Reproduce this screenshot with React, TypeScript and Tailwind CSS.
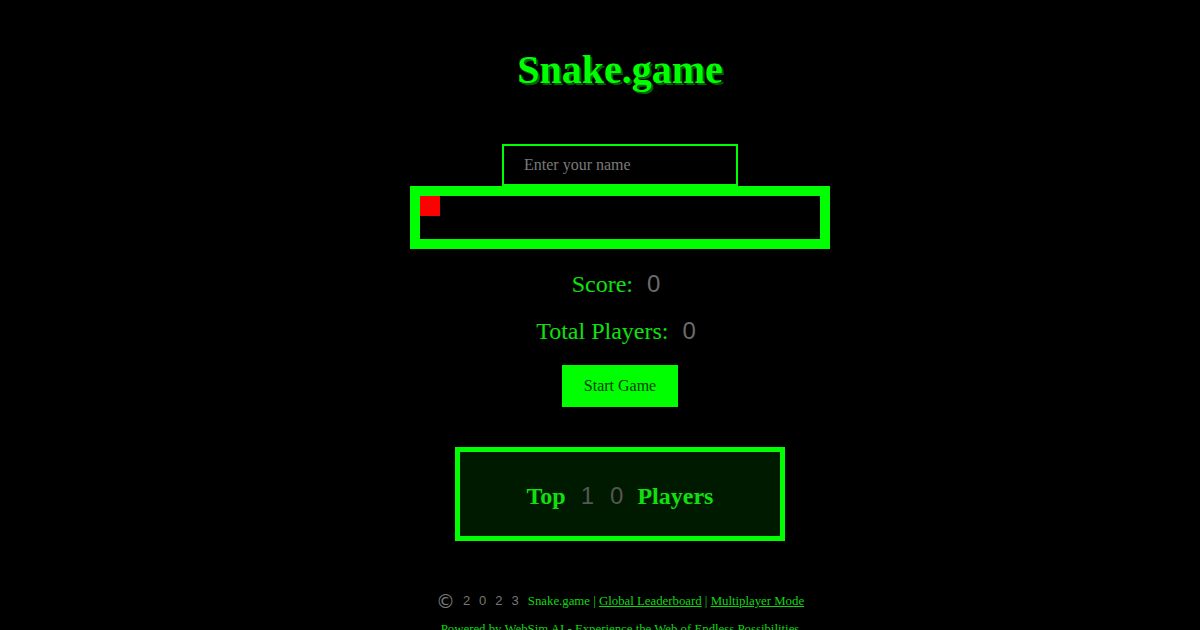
import React from 'react';

const serif = "font-['Liberation_Serif','Times_New_Roman',serif]";
const sans = "font-['Liberation_Sans',Arial,sans-serif]";

function Digits({ value, className }: { value: string; className: string }) {
  return (
    <span className={`${sans} text-[#6b6b6b] ${className}`}>
      {value.split('').map((d, i) => (
        <span key={i}>{d}</span>
      ))}
    </span>
  );
}

export default function App() {
  return (
    <div className={`min-h-[630px] h-[630px] w-full overflow-hidden bg-black pl-[40px] ${serif}`}>
      <div className="flex flex-col items-center">
        <h1 className="mt-[47px] text-[40px] font-bold leading-[46px] text-[#00ff00] [text-shadow:2px_2px_#006400]">
          Snake.game
        </h1>

        <input
          type="text"
          placeholder="Enter your name"
          className="mt-[51px] h-[42px] w-[236px] border-2 border-[#00ff00] bg-black pl-5 text-base text-[#00ff00] outline-none placeholder:text-[#7a7a7a]"
        />

        {/* board */}
        <div className="h-[63px] w-[420px] border-[10px] border-[#00ff00] bg-black">
          <div className="h-5 w-5 bg-[#ff0000]" />
        </div>

        <div className="mt-[20px] flex items-center text-2xl leading-[30px] text-[#10e010]">
          <span>Score:</span>
          <Digits value="0" className="ml-[14px] mr-[8px] text-[24px]" />
        </div>

        <div className="mt-[17px] flex items-center text-2xl leading-[30px] text-[#10e010]">
          <span>Total Players:</span>
          <Digits value="0" className="ml-[14px] mr-[8px] text-[24px]" />
        </div>

        <button className="mt-[19px] h-[42px] w-[116px] bg-[#00ff00] text-base text-[#0a3a0a]">
          Start Game
        </button>

        <div className="mt-[40px] flex h-[94px] w-[330px] items-center justify-center border-[5px] border-[#00ff00] bg-[#001a00] pt-[4px]">
          <h2 className="flex items-center text-2xl font-bold text-[#10e010]">
            <span>Top</span>
            <span className={`${sans} ml-[15px] text-[24px] font-normal text-[#555]`}>1</span>
            <span className={`${sans} ml-[16px] text-[24px] font-normal text-[#555]`}>0</span>
            <span className="ml-[14px]">Players</span>
          </h2>
        </div>

        <footer className="mt-[50px] flex flex-col items-center text-[12.8px] text-[#10d810]">
          <p className="flex items-center leading-[20px]">
            <span className="flex items-center font-['DejaVu_Sans',sans-serif] text-[#777]">
              <span className="text-[19px] leading-none">©</span>
              <span className={`${sans} ml-[8px] text-[13px] tracking-[9px]`}>2023</span>
            </span>
            <span>Snake.game |&nbsp;</span>
            <a href="#" className="underline">Global Leaderboard</a>
            <span>&nbsp;|&nbsp;</span>
            <a href="#" className="underline">Multiplayer Mode</a>
          </p>
          <p className="mt-[8px] leading-[20px]">
            Powered by <a href="#" className="underline">WebSim AI</a> - Experience the Web of Endless Possibilities
          </p>
        </footer>
      </div>
    </div>
  );
}
